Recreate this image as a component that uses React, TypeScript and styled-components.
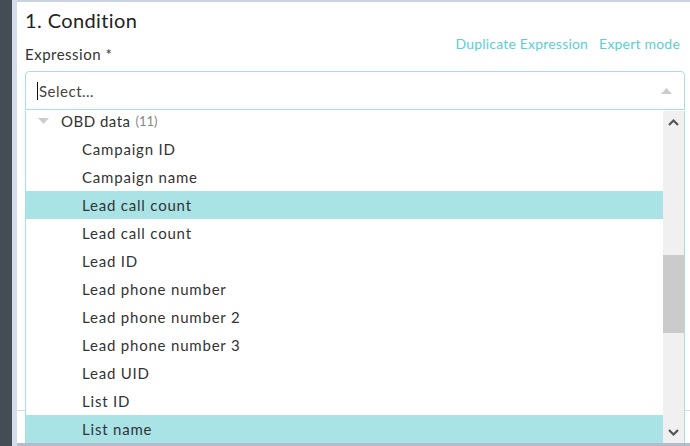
import React from "react";
import styled, { createGlobalStyle } from "styled-components";

const GlobalStyle = createGlobalStyle`
  html, body { margin: 0; padding: 0; }
  body { font-family: Lato, "Noto Sans", sans-serif; color: #333; background: #fff; }
  * { box-sizing: border-box; }
`;

const Page = styled.div`
  display: flex;
  width: 690px;
  height: 446px;
  overflow: hidden;
  background: #b3bccb;
`;

const DarkRail = styled.div`
  width: 12px;
  flex: none;
  background: #444d56;
`;

const LightRail = styled.div`
  width: 5px;
  flex: none;
  background: #d3ddeb;
`;

const Panel = styled.div`
  position: relative;
  flex: 1;
  height: 443px;
  background: #fff;
  border-top: 2px solid #c8d2e0;
  padding: 0 5px 0 8px;
  display: flex;
  flex-direction: column;
`;

const Heading = styled.h2`
  margin: 6px 0 0;
  font-size: 20px;
  font-weight: 400;
  letter-spacing: 0.4px;
  line-height: 24px;
  color: #222;
`;

const LabelRow = styled.div`
  display: flex;
  justify-content: space-between;
  align-items: flex-start;
  margin-top: 6px;
`;

const Label = styled.span`
  font-size: 15px;
  line-height: 20px;
  margin-top: 6px;
  letter-spacing: 0.5px;
  color: #333;
`;

const Links = styled.div`
  display: flex;
  gap: 11px;
  padding-right: 5px;
  margin-top: -3px;
`;

const Link = styled.a`
  font-size: 14px;
  line-height: 18px;
  color: #5ccfd3;
  letter-spacing: 0.2px;
  cursor: pointer;
`;

const Control = styled.div`
  margin-top: 7px;
  height: 39px;
  border: 1px solid #a9dfe3;
  border-radius: 4px 4px 0 0;
  display: flex;
  align-items: center;
  padding: 0 12px 0 11px;
`;

const Caret = styled.span`
  width: 1px;
  height: 18px;
  background: #111;
  margin-right: 1px;
`;

const Placeholder = styled.span`
  flex: 1;
  font-size: 15px;
  color: #444;
  letter-spacing: 0.5px;
`;

const Divider = styled.div`
  position: absolute;
  left: 0;
  right: 0;
  top: 408px;
  height: 1px;
  background: #dcdcdc;
`;

const Menu = styled.div`
  position: absolute;
  left: 8px;
  top: 109px;
  width: 660px;
  bottom: 0;
  display: flex;
  background: #fff;
  border-left: 1px solid #a9dfe3;
  border-right: 1px solid #a9dfe3;
  overflow: hidden;
  z-index: 2;
`;

const List = styled.div`
  flex: 1;
  margin-top: -4px;
  margin-left: -1px;
  display: flex;
  flex-direction: column;
`;

const GroupRow = styled.div`
  height: 28px;
  flex: none;
  display: flex;
  align-items: center;
  padding-left: 13px;
  font-size: 15px;
  color: #333;
`;

const GroupName = styled.span`
  margin-left: 12px;
  letter-spacing: 0.5px;
`;

const Count = styled.span`
  margin-left: 5px;
  font-size: 13px;
  color: #888;
`;

const Option = styled.div<{ $active?: boolean }>`
  height: 28px;
  flex: none;
  display: flex;
  align-items: center;
  padding-left: 57px;
  font-size: 15px;
  letter-spacing: 0.8px;
  color: #333;
  background: ${(p) => (p.$active ? "#a9e3e6" : "#fff")};
`;

const Track = styled.div`
  width: 21px;
  flex: none;
  background: #f0f0f0;
  display: flex;
  flex-direction: column;
`;

const ScrollBtn = styled.div`
  height: 22px;
  flex: none;
  display: flex;
  align-items: center;
  justify-content: center;
`;

const Thumb = styled.div`
  height: 78px;
  flex: none;
  background: #cbcbcb;
`;

const Spacer = styled.div<{ $h?: number }>`
  flex: ${(p) => (p.$h ? `0 0 ${p.$h}px` : "1")};
`;

const Tri = ({ up }: { up?: boolean }) => (
  <svg width="11" height="6" viewBox="0 0 11 6">
    <polygon points={up ? "0,6 5.5,0 11,6" : "0,0 5.5,6 11,0"} fill="#cccccc" />
  </svg>
);

const Chevron = ({ up }: { up?: boolean }) => (
  <svg width="11" height="7" viewBox="0 0 11 7">
    <polyline
      points={up ? "1,6 5.5,1.5 10,6" : "1,1 5.5,5.5 10,1"}
      fill="none"
      stroke="#555"
      strokeWidth="2.2"
    />
  </svg>
);

const items: { label: string; active?: boolean }[] = [
  { label: "Campaign ID" },
  { label: "Campaign name" },
  { label: "Lead call count", active: true },
  { label: "Lead call count" },
  { label: "Lead ID" },
  { label: "Lead phone number" },
  { label: "Lead phone number 2" },
  { label: "Lead phone number 3" },
  { label: "Lead UID" },
  { label: "List ID" },
  { label: "List name", active: true },
];

export default function App() {
  return (
    <>
      <GlobalStyle />
      <Page>
        <DarkRail />
        <LightRail />
        <Panel>
          <Heading>1. Condition</Heading>
          <LabelRow>
            <Label>Expression *</Label>
            <Links>
              <Link>Duplicate Expression</Link>
              <Link>Expert mode</Link>
            </Links>
          </LabelRow>
          <Control>
            <Caret />
            <Placeholder>Select...</Placeholder>
            <Tri up />
          </Control>
          <Divider />
          <Menu>
            <List>
              <GroupRow>
                <Tri />
                <GroupName>OBD data</GroupName>
                <Count>(11)</Count>
              </GroupRow>
              {items.map((it, i) => (
                <Option key={i} $active={it.active}>
                  {it.label}
                </Option>
              ))}
            </List>
            <Track>
              <ScrollBtn>
                <Chevron up />
              </ScrollBtn>
              <Spacer $h={122} />
              <Thumb />
              <Spacer />
              <ScrollBtn>
                <Chevron />
              </ScrollBtn>
            </Track>
          </Menu>
        </Panel>
      </Page>
    </>
  );
}
